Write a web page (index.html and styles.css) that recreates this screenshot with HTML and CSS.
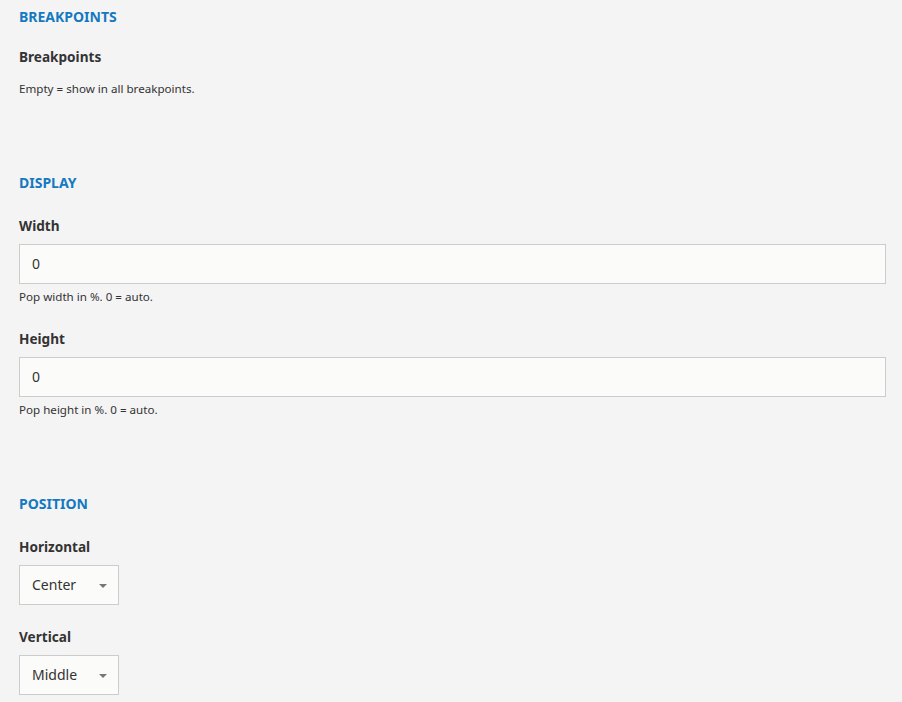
FILE: index.html
```html
<!DOCTYPE html>
<html>
<head>
<meta charset="utf-8">
<link rel="stylesheet" href="styles.css">
</head>
<body>
<div class="page">
  <section class="group group-first">
    <h2 class="group-title">BREAKPOINTS</h2>
    <div class="field field-first">
      <div class="label">Breakpoints</div>
      <div class="desc desc-loose">Empty = show in all breakpoints.</div>
    </div>
  </section>

  <section class="group">
    <h2 class="group-title">DISPLAY</h2>
    <div class="field">
      <div class="label">Width</div>
      <div class="input">0</div>
      <div class="desc">Pop width in %. 0 = auto.</div>
    </div>
    <div class="field field-after-desc">
      <div class="label">Height</div>
      <div class="input">0</div>
      <div class="desc">Pop height in %. 0 = auto.</div>
    </div>
  </section>

  <section class="group">
    <h2 class="group-title">POSITION</h2>
    <div class="field">
      <div class="label">Horizontal</div>
      <div class="select"><span>Center</span><span class="caret"></span></div>
    </div>
    <div class="field field-after-select">
      <div class="label">Vertical</div>
      <div class="select"><span>Middle</span><span class="caret"></span></div>
    </div>
  </section>
</div>
</body>
</html>
```

FILE: styles.css
```css
html, body {
  margin: 0;
  padding: 0;
  background: #f4f4f4;
}
body {
  font-family: "Noto Sans", "Open Sans", sans-serif;
  color: #333333;
}
.page {
  padding: 7px 16px 0 19px;
}
.group {
  margin-top: 76px;
}
.group-first {
  margin-top: 0;
}
.group-title {
  margin: 0;
  font-size: 14px;
  line-height: 20px;
  font-weight: 700;
  color: #1479c0;
}
.field {
  margin-top: 23px;
}
.field-first {
  margin-top: 20px;
}
.field-after-desc {
  margin-top: 24px;
}
.field-after-select {
  margin-top: 22px;
}
.label {
  font-size: 13.6px;
  line-height: 20px;
  font-weight: 700;
  color: #333333;
  margin-bottom: 8px;
}
.input {
  box-sizing: border-box;
  height: 40px;
  border: 1px solid #cccccc;
  background: #fbfbf9;
  font-size: 14px;
  line-height: 38px;
  padding: 0 12px;
  color: #333333;
}
.desc {
  font-size: 11.6px;
  line-height: 16px;
  margin-top: 5px;
  color: #333333;
}
.desc-loose {
  margin-top: 14px;
}
.select {
  box-sizing: border-box;
  width: 100px;
  height: 40px;
  border: 1px solid #cccccc;
  background: #fbfbf9;
  font-size: 14px;
  line-height: 38px;
  padding: 0 12px;
  display: flex;
  align-items: center;
  justify-content: space-between;
}
.caret {
  width: 0;
  height: 0;
  border-left: 4px solid transparent;
  border-right: 4px solid transparent;
  border-top: 4px solid #777777;
  margin-right: -1px;
  margin-top: 1px;
}
```
